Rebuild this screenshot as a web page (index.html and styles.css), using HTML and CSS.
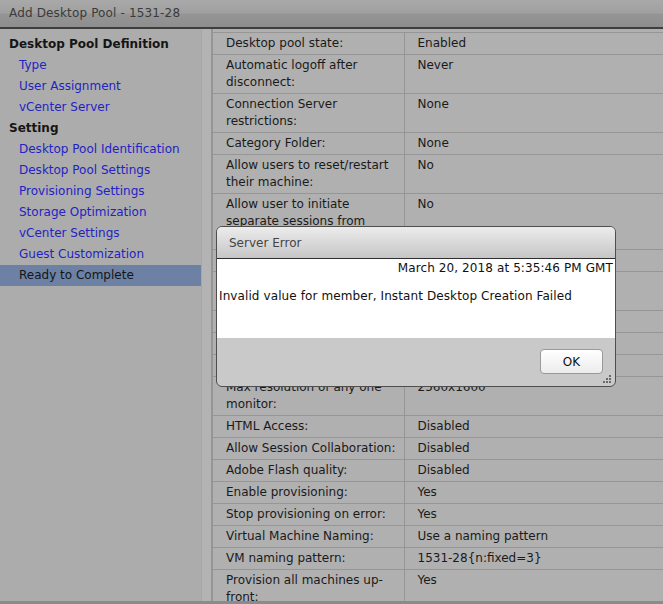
FILE: index.html
```html
<!DOCTYPE html>
<html>
<head>
<meta charset="utf-8">
<title>Add Desktop Pool - 1531-28</title>
<link rel="stylesheet" href="styles.css">
</head>
<body>
<div class="window">
  <div class="titlebar">Add Desktop Pool - 1531-28</div>
  <div class="main">
    <nav class="nav">
      <div class="nav-head">Desktop Pool Definition</div>
      <a class="nav-link">Type</a>
      <a class="nav-link">User Assignment</a>
      <a class="nav-link">vCenter Server</a>
      <div class="nav-head">Setting</div>
      <a class="nav-link">Desktop Pool Identification</a>
      <a class="nav-link">Desktop Pool Settings</a>
      <a class="nav-link">Provisioning Settings</a>
      <a class="nav-link">Storage Optimization</a>
      <a class="nav-link">vCenter Settings</a>
      <a class="nav-link">Guest Customization</a>
      <a class="nav-link selected">Ready to Complete</a>
    </nav>
    <div class="splitter"></div>
    <div class="content">
      <table class="summary">
        <colgroup><col class="c1"><col class="c2"></colgroup>
        <tr><td>Desktop pool state:</td><td>Enabled</td></tr>
        <tr><td>Automatic logoff after disconnect:</td><td>Never</td></tr>
        <tr><td>Connection Server restrictions:</td><td>None</td></tr>
        <tr><td>Category Folder:</td><td>None</td></tr>
        <tr><td>Allow users to reset/restart their machine:</td><td>No</td></tr>
        <tr><td>Allow user to initiate separate sessions from different client devices:</td><td>No</td></tr>
        <tr><td>Default display protocol:</td><td>VMware Blast</td></tr>
        <tr><td>Allow users to choose protocol:</td><td>Yes</td></tr>
        <tr><td>3D Renderer:</td><td>Disabled</td></tr>
        <tr><td>Session type:</td><td>Desktop</td></tr>
        <tr><td>Max number of monitors:</td><td>2</td></tr>
        <tr><td>Max resolution of any one monitor:</td><td>2560x1600</td></tr>
        <tr><td>HTML Access:</td><td>Disabled</td></tr>
        <tr><td>Allow Session Collaboration:</td><td>Disabled</td></tr>
        <tr><td>Adobe Flash quality:</td><td>Disabled</td></tr>
        <tr><td>Enable provisioning:</td><td>Yes</td></tr>
        <tr><td>Stop provisioning on error:</td><td>Yes</td></tr>
        <tr><td>Virtual Machine Naming:</td><td>Use a naming pattern</td></tr>
        <tr><td>VM naming pattern:</td><td>1531-28{n:fixed=3}</td></tr>
        <tr><td>Provision all machines up-front:</td><td>Yes</td></tr>
      </table>
    </div>
  </div>
  <div class="bottombar"></div>

  <div class="dialog">
    <div class="dlg-head">Server Error</div>
    <div class="dlg-body">
      <div class="dlg-date">March 20, 2018 at 5:35:46 PM GMT</div>
      <div class="dlg-msg">Invalid value for member, Instant Desktop Creation Failed</div>
    </div>
    <div class="dlg-foot">
      <button class="btn">OK</button>
    </div>
    <svg class="grip" width="10" height="10" viewBox="0 0 10 10">
      <rect x="7" y="1" width="2" height="2" fill="#6a6a6a"/>
      <rect x="4" y="4" width="2" height="2" fill="#6a6a6a"/>
      <rect x="7" y="4" width="2" height="2" fill="#6a6a6a"/>
      <rect x="1" y="7" width="2" height="2" fill="#6a6a6a"/>
      <rect x="4" y="7" width="2" height="2" fill="#6a6a6a"/>
      <rect x="7" y="7" width="2" height="2" fill="#6a6a6a"/>
    </svg>
  </div>
</div>
</body>
</html>
```

FILE: styles.css
```css
* { box-sizing: border-box; }
html, body { margin: 0; padding: 0; }
body {
  font-family: "DejaVu Sans", Verdana, sans-serif;
  font-size: 12px;
  color: #1a1a1a;
  background: #adadad;
}
.window {
  position: relative;
  width: 663px;
  height: 604px;
  display: flex;
  flex-direction: column;
  overflow: hidden;
}
.titlebar {
  height: 29px;
  flex: none;
  padding-left: 9px;
  line-height: 26px;
  letter-spacing: 0.15px;
  color: #3b3b3b;
  background: linear-gradient(#a9a9a9 0%, #a0a0a0 48%, #959595 52%, #8e8e8e 100%);
  border-bottom: 2px solid #3e3e3e;
}
.main {
  flex: 1;
  display: flex;
  min-height: 0;
}
.nav {
  width: 201px;
  flex: none;
  background: #acacac;
  padding-top: 5px;
  display: flex;
  flex-direction: column;
}
.nav-head {
  font-weight: bold;
  line-height: 21px;
  padding-left: 9px;
  color: #151515;
}
.nav-link {
  line-height: 21px;
  padding-left: 19px;
  color: #2323c4;
}
.nav-link.selected {
  background: #6c81a4;
  color: #151515;
}
.splitter {
  width: 12px;
  flex: none;
  background: #b3b3b3;
  border-left: 1px solid #a6a6a6;
  border-right: 2px solid #959595;
}
.content {
  flex: 1;
  background: #b0b0b0;
  padding-top: 3px;
  overflow: hidden;
}
.summary {
  border-collapse: collapse;
  table-layout: fixed;
  width: 520px;
  border-top: 1px solid #969696;
}
.summary col.c1 { width: 191px; }
.summary td {
  vertical-align: top;
  padding: 2px 6px 2px 13px;
  line-height: 17px;
  border-bottom: 1px solid #969696;
  color: #1a1a1a;
}
.summary td:first-child {
  border-right: 1px solid #969696;
}
.bottombar {
  height: 3px;
  flex: none;
  background: #8b8b8b;
}
.dialog {
  position: absolute;
  left: 216px;
  top: 226px;
  width: 400px;
  height: 161px;
  border: 1px solid #4e4e4e;
  border-radius: 6px;
  overflow: hidden;
  background: #c9c9c9;
  display: flex;
  flex-direction: column;
}
.dlg-head {
  height: 32px;
  flex: none;
  padding-left: 12px;
  line-height: 32px;
  color: #444;
  background: linear-gradient(#ececec, #c6c6c6);
  border-bottom: 1px solid #2e2e2e;
}
.dlg-body {
  height: 79px;
  flex: none;
  background: #fff;
  padding: 1px 2px 0 2px;
  line-height: 17px;
  letter-spacing: 0.1px;
  color: #111;
}
.dlg-date { text-align: right; }
.dlg-msg { margin-top: 11px; }
.dlg-foot {
  flex: 1;
  display: flex;
  justify-content: flex-end;
  align-items: flex-start;
  padding: 11px 12px 0 0;
}
.btn {
  width: 63px;
  height: 25px;
  border: 1px solid #9a9a9a;
  border-radius: 4px;
  background: linear-gradient(#ffffff, #ececec);
  font-family: "DejaVu Sans", Verdana, sans-serif;
  font-size: 12px;
  color: #111;
  padding: 0;
}
.grip {
  position: absolute;
  right: 3px;
  bottom: 2px;
}
```
